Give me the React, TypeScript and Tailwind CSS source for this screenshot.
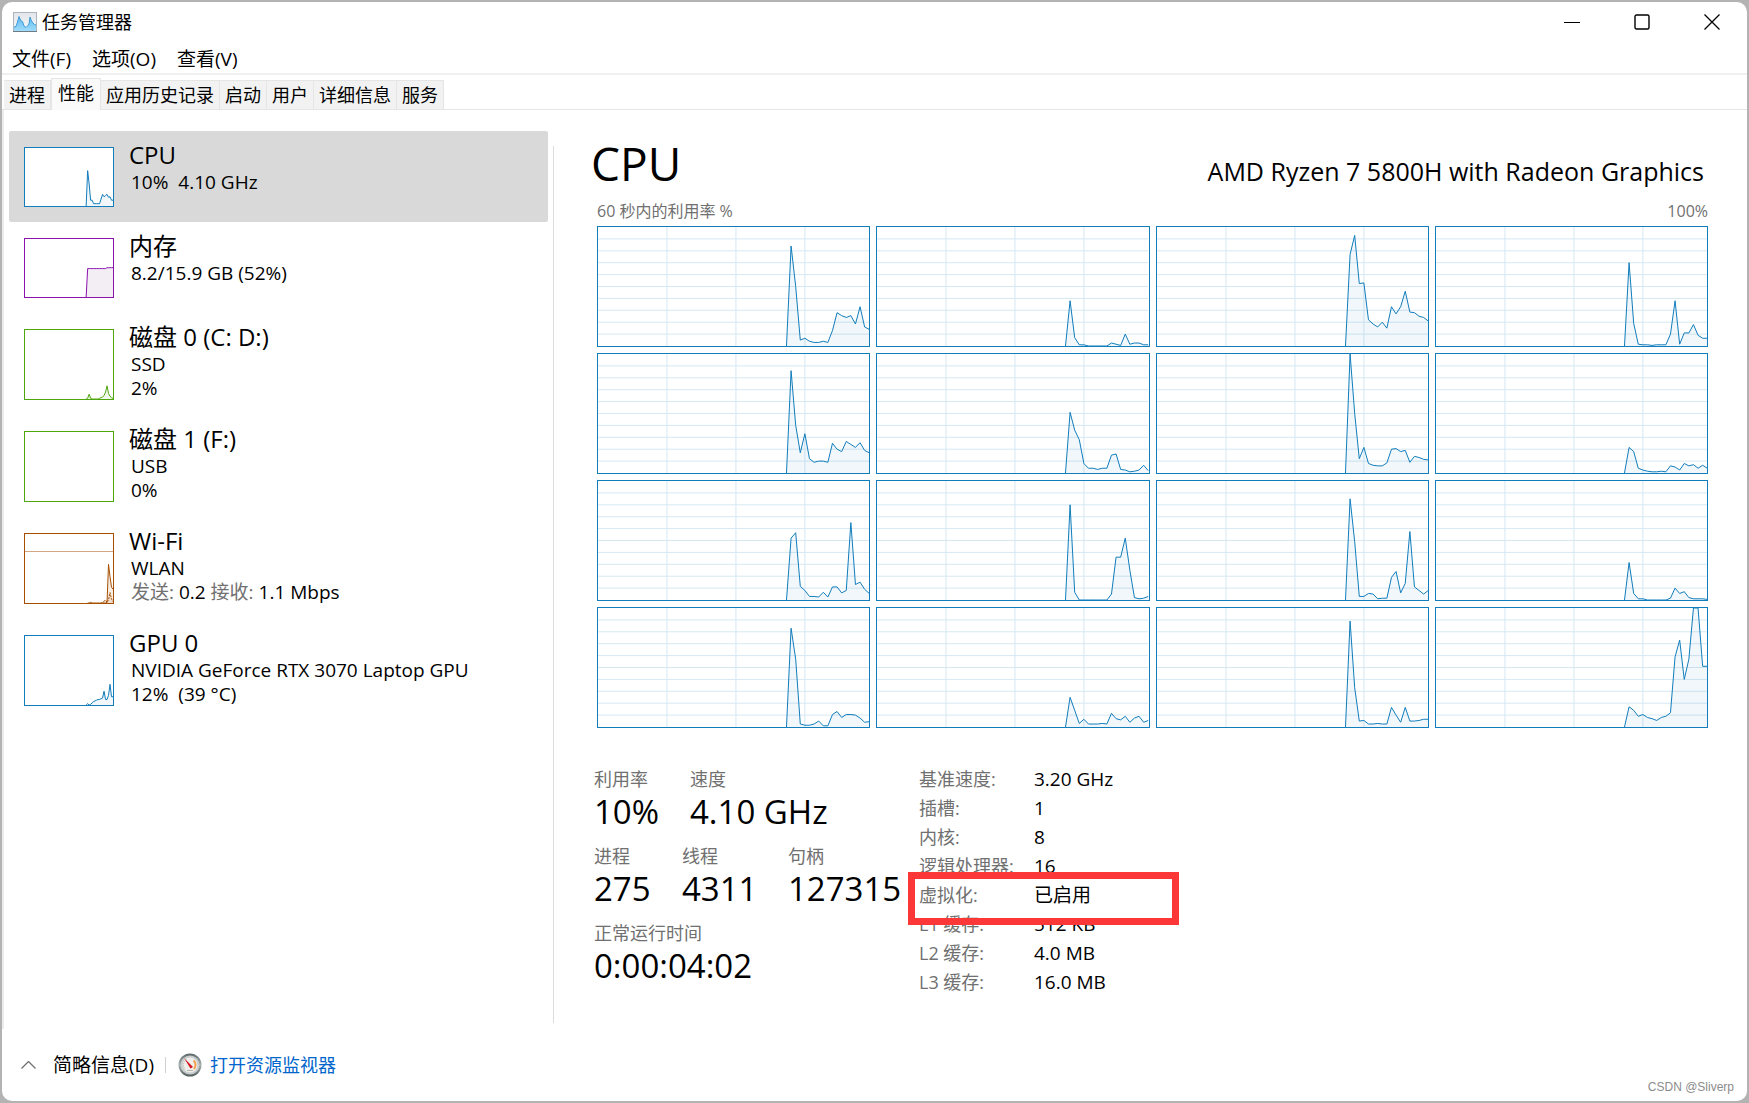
import type { ReactNode } from "react";

interface Series {
  values: number[];
  dashed?: boolean;
}

interface Resource {
  name: string;
  lines: ReactNode[];
  series: Series[];
  color: "blue" | "purple" | "green" | "brown";
  average?: number;
}

const SAMPLES = 60;

const palette = {
  blue: { border: "border-[#117dbb]", stroke: "stroke-[#117dbb]", fill: "fill-[#117dbb]/6" },
  purple: { border: "border-[#8b12ae]", stroke: "stroke-[#8b12ae]", fill: "fill-[#5a2a6e]/8" },
  green: { border: "border-[#4da60c]", stroke: "stroke-[#4da60c]", fill: "fill-[#4da60c]/8" },
  brown: { border: "border-[#a74f01]", stroke: "stroke-[#a74f01]", fill: "fill-[#a74f01]/10" },
};

const tabs = ["进程", "性能", "应用历史记录", "启动", "用户", "详细信息", "服务"];

const resources: Resource[] = [
  {
    name: "CPU",
    lines: ["10%  4.10 GHz"],
    color: "blue",
    series: [{ values: [0, 61, 38, 10, 10, 4, 4, 4, 4, 4, 12, 20, 16, 18, 20, 15, 16, 10, 10] }],
  },
  {
    name: "内存",
    lines: ["8.2/15.9 GB (52%)"],
    color: "purple",
    series: [{ values: [0, 49, 49, 49, 49, 49, 49, 49, 49, 49, 49, 49, 49, 49, 50.5, 50.5, 50.5, 50.5, 50.5] }],
  },
  {
    name: "磁盘 0 (C: D:)",
    lines: ["SSD", "2%"],
    color: "green",
    series: [{ values: [0, 1, 7, 1, 0, 0, 0, 0, 0, 1, 2, 3, 5, 10, 19, 8, 4, 2, 1] }],
  },
  { name: "磁盘 1 (F:)", lines: ["USB", "0%"], color: "green", series: [] },
  {
    name: "Wi-Fi",
    lines: [
      "WLAN",
      <>
        <span className="text-[#707070]">发送:</span> 0.2 <span className="text-[#707070]">接收:</span> 1.1 Mbps
      </>,
    ],
    color: "brown",
    average: 75,
    series: [
      { values: [0, 0, 1, 0, 0, 0, 0, 0, 0, 0, 0, 0, 0, 1, 56, 38, 23, 20] },
      { values: [0, 0, 3, 4, 1, 5, 15, 6, 2], dashed: true },
    ],
  },
  {
    name: "GPU 0",
    lines: ["NVIDIA GeForce RTX 3070 Laptop GPU", "12%  (39 °C)"],
    color: "blue",
    series: [{ values: [0, 2, 0, 1, 3, 5, 6, 7, 8, 8, 9, 10, 20, 8, 8, 14, 30, 12, 12] }],
  },
];

const cores: number[][] = [
  [0, 84, 50, 5, 6.5, 4, 3, 3, 4, 3, 13, 28, 25.5, 24, 25.5, 18.5, 33, 16, 14],
  [0, 38, 7, 1, 1, 0, 0, 0, 0, 0, 2.5, 1.5, 0.5, 10, 1.5, 2.5, 2.5, 1, 1],
  [0, 77, 93, 52.5, 53, 22, 18.5, 16, 20, 15, 33, 27, 33, 46, 28.5, 28, 25, 24, 21],
  [0, 70, 19, 1.5, 1, 1, 0.5, 1, 1, 1, 10, 38, 1.5, 11, 11, 18, 9, 6.5, 6.5],
  [0, 86, 40, 17, 33, 12, 9, 10, 10, 9, 25, 20, 18, 26.5, 24, 21.5, 25.5, 19, 17],
  [0, 51, 36, 28, 8, 4, 4, 3, 4, 4, 15, 16, 3, 2.5, 1, 1.5, 2.5, 6.5, 2],
  [0, 100, 50, 12, 21.5, 8, 6.5, 6, 6, 8.5, 20, 20.5, 18, 19, 9, 14, 13, 11.5, 11],
  [0, 21.5, 18, 4, 2.5, 1.5, 1, 1, 1.5, 1, 6, 5, 2.5, 8, 6, 7, 4, 6.5, 4],
  [0, 52, 56.5, 11.5, 8, 3, 3, 2.5, 6.5, 2.5, 11, 11, 6, 8, 65, 13, 15, 9, 5.5],
  [0, 80, 6.5, 0, 0, 0, 0, 0, 0, 0, 5, 36, 36, 52, 25, 2, 1, 1.5, 3],
  [0, 85, 49, 3, 3, 5.5, 5, 1, 1.5, 1.5, 19, 24, 6, 14, 57.5, 11, 8, 5, 8],
  [0, 31.5, 5.5, 1, 1, 0, 0, 0, 0, 0, 1.5, 10, 5.5, 7, 2, 1, 1, 1, 0.5],
  [0, 83, 57, 2.5, 1.5, 1.5, 2.5, 5, 1, 1, 10.5, 13, 8, 10.5, 10.5, 10, 7.5, 4, 4.5],
  [0, 25, 14, 3, 6.5, 2.5, 2.5, 2.5, 3, 2.5, 11.5, 7, 6, 9, 4, 7.5, 9, 4, 5.5],
  [0, 89, 33, 5, 5.5, 2.5, 2.5, 3, 2.5, 2.5, 16.5, 10, 4, 16.5, 5, 5, 5.5, 6.5, 6.5],
  [0, 17, 14, 9, 10.5, 8, 7, 5.5, 8, 9, 12, 59, 73, 40, 57, 100, 100, 51, 51],
];

const liveStats = [
  [
    { label: "利用率", value: "10%", width: "w-24" },
    { label: "速度", value: "4.10 GHz", width: "" },
  ],
  [
    { label: "进程", value: "275", width: "w-22" },
    { label: "线程", value: "4311", width: "w-[106px]" },
    { label: "句柄", value: "127315", width: "" },
  ],
  [{ label: "正常运行时间", value: "0:00:04:02", width: "" }],
];

const specs = [
  ["基准速度:", "3.20 GHz"],
  ["插槽:", "1"],
  ["内核:", "8"],
  ["逻辑处理器:", "16"],
  ["虚拟化:", "已启用"],
  ["L1 缓存:", "512 KB"],
  ["L2 缓存:", "4.0 MB"],
  ["L3 缓存:", "16.0 MB"],
];

/** The newest sample sits on the right edge. */
function toPoints(values: number[]): string {
  const start = SAMPLES - values.length;
  return values.map((v, i) => `${start + i},${100 - v}`).join(" ");
}

interface GraphProps {
  series: Series[];
  color: Resource["color"];
  grid?: boolean;
  average?: number;
}

function Graph({ series, color, grid, average }: GraphProps) {
  const c = palette[color];
  return (
    <svg
      className={`block size-full border bg-white ${c.border}`}
      viewBox="0 0 59 100"
      preserveAspectRatio="none"
      aria-hidden="true"
    >
      {grid && (
        <g className="stroke-[#d5e8f3]" shapeRendering="crispEdges">
          {[15, 30, 45].map((x) => (
            <line key={x} x1={x} x2={x} y1="0" y2="100" vectorEffect="non-scaling-stroke" />
          ))}
          {[10, 20, 30, 40, 50, 60, 70, 80, 90].map((y) => (
            <line key={y} x1="0" x2="59" y1={y} y2={y} vectorEffect="non-scaling-stroke" />
          ))}
        </g>
      )}
      {average !== undefined && (
        <line
          className="stroke-[#d3a780]"
          x1="0"
          x2="59"
          y1={100 - average}
          y2={100 - average}
          vectorEffect="non-scaling-stroke"
          shapeRendering="crispEdges"
        />
      )}
      {series.map(({ values, dashed }, i) => (
        <g key={i}>
          <polygon className={c.fill} points={`${SAMPLES - values.length},100 ${toPoints(values)} 59,100`} />
          <polyline
            className={`fill-none ${c.stroke}`}
            points={toPoints(values)}
            strokeDasharray={dashed ? "2 1" : undefined}
            vectorEffect="non-scaling-stroke"
          />
        </g>
      ))}
    </svg>
  );
}

function AppIcon() {
  return (
    <svg className="h-5 w-6" viewBox="0 0 24 20" aria-hidden="true">
      <defs>
        <linearGradient id="app-bg" x1="0" y1="0" x2="0" y2="1">
          <stop offset="0" stopColor="#e3e6ea" />
          <stop offset="1" stopColor="#f6f8fa" />
        </linearGradient>
        <linearGradient id="app-area" x1="0" y1="0" x2="0" y2="1">
          <stop offset="0" stopColor="#5fb9ee" />
          <stop offset="1" stopColor="#9fdcfb" />
        </linearGradient>
      </defs>
      <rect x="0.5" y="0.5" width="23" height="19" fill="url(#app-bg)" stroke="#a9b4bf" />
      <path
        d="M1 15 3 14.5 4.5 10 6 4.5 8 9 9.5 9.5 11 14 13 15.5 14.5 14 16 12 17 5 18.5 9 20 11 21.5 12.5 23 13V19H1Z"
        fill="url(#app-area)"
      />
      <path
        d="M1 15 3 14.5 4.5 10 6 4.5 8 9 9.5 9.5 11 14 13 15.5 14.5 14 16 12 17 5 18.5 9 20 11 21.5 12.5 23 13"
        fill="none"
        stroke="#3f9bd8"
      />
      <path d="M0 19.5H24" stroke="#6f7a85" />
    </svg>
  );
}

function GaugeIcon() {
  return (
    <svg className="size-6" viewBox="0 0 24 24" aria-hidden="true">
      <defs>
        <linearGradient id="gauge-rim" x1="0" y1="0" x2="0" y2="1">
          <stop offset="0" stopColor="#5d6668" />
          <stop offset="0.5" stopColor="#a9b2b3" />
          <stop offset="1" stopColor="#525b5c" />
        </linearGradient>
      </defs>
      <circle cx="12" cy="12" r="11.5" fill="url(#gauge-rim)" />
      <circle cx="12" cy="12" r="9.5" fill="#c9cdcd" />
      <circle cx="12" cy="12" r="7.5" fill="#f1efec" />
      <path d="M7 16.5A6.5 6.5 0 0 1 9 6.5" fill="none" stroke="#a8a8a4" strokeDasharray="1 1" />
      <path d="M15.5 7.5A6 6 0 0 1 16 16" fill="none" stroke="#f0a04c" strokeWidth="2" />
      <path d="M9 17.5h6" stroke="#b5b5b0" />
      <path d="M6 5 15 14 12.5 15.5Z" fill="#d5121e" />
    </svg>
  );
}

function TitleBar() {
  const control = "flex h-10 w-[70px] items-center justify-center";
  return (
    <header className="flex h-10 items-center pl-[11px]">
      <AppIcon />
      <h1 className="ml-[5px] flex-1 text-[18px] leading-6">任务管理器</h1>
      <button type="button" className={control} aria-label="最小化">
        <svg className="size-4" viewBox="0 0 16 16" fill="none" stroke="black">
          <path d="M0 8.5h16" />
        </svg>
      </button>
      <button type="button" className={control} aria-label="最大化">
        <svg className="size-4" viewBox="0 0 16 16" fill="none" stroke="black">
          <rect x="1" y="1" width="14" height="14" rx="1.5" strokeWidth="1.4" />
        </svg>
      </button>
      <button type="button" className={control} aria-label="关闭">
        <svg className="size-4" viewBox="0 0 16 16" fill="none" stroke="black">
          <path d="m.5.5 15 15m0-15-15 15" strokeWidth="1.3" />
        </svg>
      </button>
    </header>
  );
}

function TabStrip() {
  return (
    <div role="tablist" className="flex h-[35px] items-end border-b border-[#e5e5e5] pl-0.5">
      {tabs.map((tab) =>
        tab === "性能" ? (
          <button
            key={tab}
            type="button"
            role="tab"
            aria-selected="true"
            className="-mb-px h-8 border border-b-0 border-[#e5e5e5] bg-[#fafafa] px-1.5 pb-1 text-[18px] leading-6"
          >
            {tab}
          </button>
        ) : (
          <button
            key={tab}
            type="button"
            role="tab"
            aria-selected="false"
            className="h-[29px] border-t border-r border-[#e5e5e5] bg-[#f2f2f2] px-[5px] text-[18px] leading-6"
          >
            {tab}
          </button>
        )
      )}
    </div>
  );
}

function Sidebar() {
  return (
    <nav className="w-[549px] shrink-0 pt-[21px] pl-[5px]">
      <ul className="w-[539px]">
        {resources.map((r, i) => (
          <li key={r.name}>
            <button
              type="button"
              className={`flex w-full items-start rounded-xs pt-4 pb-[15px] pl-[15px] text-left ${i === 0 ? "bg-[#d9d9d9]" : ""}`}
            >
              <span className={`block w-[90px] shrink-0 ${r.lines.length > 1 ? "h-[71px]" : "h-[60px]"}`}>
                <Graph series={r.series} color={r.color} average={r.average} />
              </span>
              <span className="-mt-2 -mb-4 ml-[15px] block">
                <span className="block text-[24px] leading-[31px]">{r.name}</span>
                {r.lines.map((line, n) => (
                  <span key={n} className="block pl-0.5 text-[19px] leading-6 whitespace-pre">
                    {line}
                  </span>
                ))}
              </span>
            </button>
          </li>
        ))}
      </ul>
    </nav>
  );
}

function CpuPanel() {
  return (
    <section className="flex-1 pt-[25px] pr-[39px] pl-[43px]">
      <div className="flex items-baseline justify-between pr-1">
        <h2 className="-ml-1.5 text-[46px] leading-14">CPU</h2>
        <p className="text-[25px] leading-8">AMD Ryzen 7 5800H with Radeon Graphics</p>
      </div>
      <div className="mt-2 flex justify-between text-[16px] leading-6 text-[#707070]">
        <span>60 秒内的利用率 %</span>
        <span>100%</span>
      </div>
      <div className="mt-[3px] grid grid-cols-4 gap-[6px]">
        {cores.map((values, i) => (
          <div key={i} className="h-[121px]">
            <Graph series={[{ values }]} color="blue" grid />
          </div>
        ))}
      </div>
      <div className="-ml-[3px] mt-[39px] flex">
        <div className="w-[325px] shrink-0">
          {liveStats.map((row, i) => (
            <dl key={i} className="flex h-[77px]">
              {row.map((s) => (
                <div key={s.label} className={`shrink-0 ${s.width}`}>
                  <dt className="text-[18px] leading-6 text-[#707070]">{s.label}</dt>
                  <dd className="text-[33px] leading-[42px]">{s.value}</dd>
                </div>
              ))}
            </dl>
          ))}
        </div>
        <div className="relative">
          <table className="leading-6">
            <tbody>
              {specs.map(([label, value]) => (
                <tr key={label} className="h-[29px] align-top">
                  <th scope="row" className="w-[115px] text-left text-[18px] font-normal text-[#707070]">
                    {label}
                  </th>
                  <td className="text-[19px]">{value}</td>
                </tr>
              ))}
            </tbody>
          </table>
          {/* callout around the virtualization row */}
          <div className="absolute top-[105px] -left-[11px] h-[53px] w-[271px] border-7 border-[#fb3737]" />
        </div>
      </div>
    </section>
  );
}

export default function App() {
  return (
    <div className="flex min-h-screen flex-col bg-[#b3b3b3] p-0.5 font-['Open_Sans','Noto_Sans_CJK_SC',sans-serif] text-black">
      <div className="flex flex-1 flex-col rounded-[10px] bg-white">
        <TitleBar />
        <div className="flex h-[33px] items-center gap-[21px] border-b-2 border-[#f0f0f0] pt-0.5 pl-2.5 text-[19px] leading-6">
          <button type="button">文件(F)</button>
          <button type="button">选项(O)</button>
          <button type="button">查看(V)</button>
        </div>
        <TabStrip />
        <main className="flex flex-1 border-l-2 border-[#ececec]">
          <Sidebar />
          <div className="mt-9 mb-1.5 w-px bg-[#dcdcdc]" />
          <CpuPanel />
        </main>
        <footer className="flex h-[72px] items-center pl-[19px]">
          <button type="button" className="flex items-center text-[19px] leading-6">
            <svg className="mr-[17px] h-2 w-[15px]" viewBox="0 0 15 8" fill="none" stroke="#707070" aria-hidden="true">
              <path d="m.5 7.5 7-7 7 7" strokeWidth="1.3" />
            </svg>
            简略信息(D)
          </button>
          <span className="mr-3 ml-[11px] h-4 w-px bg-[#d0d0d0]" />
          <a href="#resmon" className="flex items-center gap-2 text-[18px] leading-6 text-[#0066cc]">
            <GaugeIcon />
            打开资源监视器
          </a>
          <span className="mt-11 mr-[13px] ml-auto font-['Liberation_Sans',sans-serif] text-[12px] leading-4 text-[#8c8c8c]">
            CSDN @Sliverp
          </span>
        </footer>
      </div>
    </div>
  );
}
